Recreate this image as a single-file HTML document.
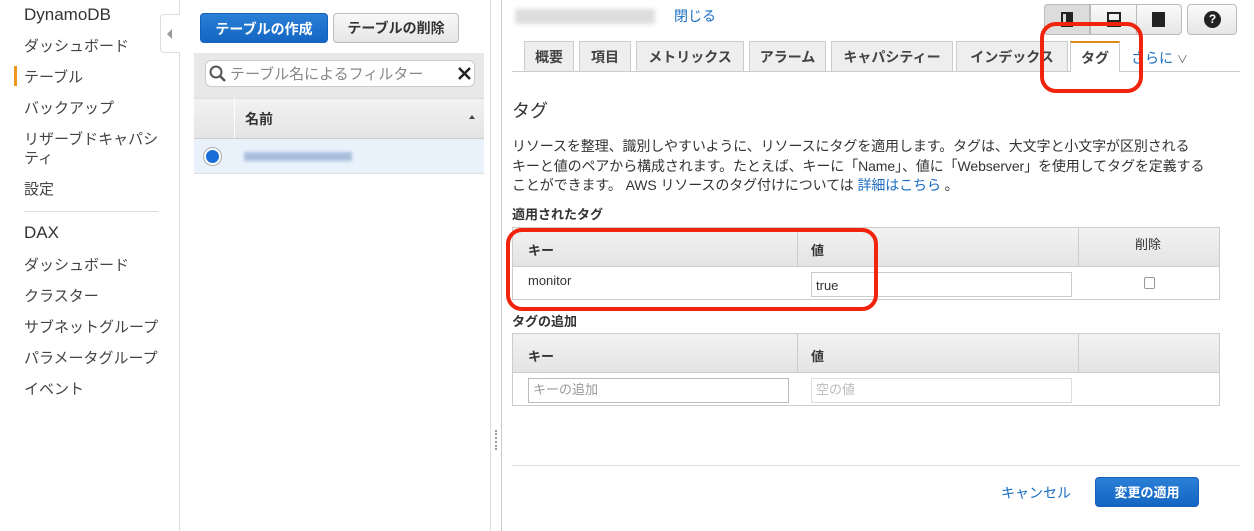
<!DOCTYPE html>
<html><head><meta charset="utf-8"><style>
*{box-sizing:border-box;margin:0;padding:0}
body{width:1254px;height:531px;position:relative;overflow:hidden;background:#fff;font-family:"Liberation Sans","Noto Sans CJK JP",sans-serif;color:#333}
.a{position:absolute;white-space:nowrap}
.nav{font-size:15px;color:#444}
.btn{position:absolute;border-radius:4px;font-size:14px;font-weight:bold;text-align:center}
.tab{position:absolute;top:41px;height:30px;background:#eee;border:1px solid #ccc;border-bottom:none;font-size:14px;font-weight:bold;text-align:center;line-height:30px;color:#444}
.th{background:linear-gradient(#f2f2f2,#e4e4e4);}
.red{position:absolute;border:4px solid #f0230c;border-radius:16px}
.inp{position:absolute;border:1px solid #ccc;background:#fff;font-size:13px;padding-left:4px;line-height:22px}
</style></head><body>
<div class="a" style="left:24px;top:5px;font-size:17px;color:#333">DynamoDB</div>
<div class="a nav" style="left:24px;top:35px">ダッシュボード</div>
<div class="a" style="left:14px;top:66px;width:3px;height:20px;background:#f0961e"></div>
<div class="a nav" style="left:24px;top:66px">テーブル</div>
<div class="a nav" style="left:24px;top:97px">バックアップ</div>
<div class="a nav" style="left:24px;top:128px">リザーブドキャパシ</div>
<div class="a nav" style="left:24px;top:147px">ティ</div>
<div class="a nav" style="left:24px;top:178px">設定</div>
<div class="a" style="left:24px;top:211px;width:134px;height:1px;background:#ddd"></div>
<div class="a" style="left:24px;top:223px;font-size:17px">DAX</div>
<div class="a nav" style="left:24px;top:254px">ダッシュボード</div>
<div class="a nav" style="left:24px;top:285px">クラスター</div>
<div class="a nav" style="left:24px;top:316px">サブネットグループ</div>
<div class="a nav" style="left:24px;top:347px">パラメータグループ</div>
<div class="a nav" style="left:24px;top:378px">イベント</div>
<div class="a" style="left:179px;top:0;width:1px;height:531px;background:#ddd"></div>
<div class="a" style="left:160px;top:14px;width:20px;height:39px;background:#fff;border:1px solid #ddd;border-right:none;border-radius:4px 0 0 4px"></div>
<div class="a" style="left:167px;top:29px;width:0;height:0;border-top:5px solid transparent;border-bottom:5px solid transparent;border-right:5px solid #999"></div>
<div class="btn" style="left:200px;top:13px;width:128px;height:30px;background:linear-gradient(#2a7fd6,#1466c2);color:#fff;line-height:30px;border:1px solid #1560b8">テーブルの作成</div>
<div class="btn" style="left:333px;top:13px;width:126px;height:30px;background:linear-gradient(#f8f8f8,#e6e6e6);border:1px solid #bbb;color:#333;line-height:28px">テーブルの削除</div>
<div class="a" style="left:194px;top:53px;width:290px;height:45px;background:#e8e8e8"></div>
<div class="a" style="left:205px;top:60px;width:270px;height:27px;background:#fff;border:1px solid #ccc;border-radius:6px"></div>
<svg class="a" style="left:208px;top:64px" width="20" height="20"><circle cx="8" cy="8" r="5.5" stroke="#555" stroke-width="2" fill="none"/><line x1="12" y1="12" x2="17" y2="17" stroke="#555" stroke-width="2.5"/></svg>
<div class="a" style="left:230px;top:63px;font-size:15px;color:#888">テーブル名によるフィルター</div>
<svg class="a" style="left:457px;top:66px" width="15" height="15"><path d="M2 2L13 13M13 2L2 13" stroke="#222" stroke-width="2.5"/></svg>
<div class="a th" style="left:194px;top:98px;width:290px;height:40px;border-top:1px solid #ddd"></div>
<div class="a" style="left:234px;top:98px;width:1px;height:40px;background:#fff"></div>
<div class="a" style="left:245px;top:109px;font-size:14px;font-weight:bold">名前</div>
<div class="a" style="left:469px;top:115px;border-left:3px solid transparent;border-right:3px solid transparent;border-bottom:4px solid #444"></div>
<div class="a" style="left:194px;top:138px;width:290px;height:36px;background:#e9f2fb;border-top:1px solid #ccc;border-bottom:1px solid #ddd"></div>
<div class="a" style="left:204px;top:148px;width:17px;height:17px;border-radius:50%;background:#1a6ed8;border:2px solid #fff;box-shadow:0 0 0 1px #aaa"></div>
<div class="a" style="left:244px;top:152px;width:108px;height:9px;background:#a9bedb;filter:blur(1.5px)"></div>
<div class="a" style="left:490px;top:0;width:1px;height:531px;background:#ddd"></div>
<div class="a" style="left:495px;top:430px;width:2px;height:20px;border-left:2px dotted #999"></div>
<div class="a" style="left:501px;top:0;width:1px;height:531px;background:#ccc"></div>
<div class="a" style="left:515px;top:9px;width:140px;height:15px;background:#ddd;filter:blur(2px)"></div>
<div class="a" style="left:674px;top:6px;font-size:14px;color:#1a6dc2">閉じる</div>
<div class="a" style="left:1044px;top:4px;width:138px;height:31px;border:1px solid #bbb;border-radius:4px;background:linear-gradient(#fafafa,#e6e6e6)"></div>
<div class="a" style="left:1044px;top:4px;width:46px;height:31px;background:#dcdcdc;border:1px solid #bbb;border-radius:4px 0 0 4px"></div>
<div class="a" style="left:1090px;top:4px;width:1px;height:31px;background:#bbb"></div>
<div class="a" style="left:1136px;top:4px;width:1px;height:31px;background:#bbb"></div>
<div class="a" style="left:1061px;top:12px;width:12px;height:15px;border:2px solid #222;border-right-width:7px"></div>
<div class="a" style="left:1107px;top:12px;width:14px;height:15px;border:2px solid #222;border-bottom-width:7px"></div>
<div class="a" style="left:1152px;top:12px;width:13px;height:15px;background:#222"></div>
<div class="a" style="left:1187px;top:4px;width:50px;height:31px;border:1px solid #bbb;border-radius:4px;background:linear-gradient(#fafafa,#e6e6e6)"></div>
<div class="a" style="left:1204px;top:11px;width:17px;height:17px;border-radius:50%;background:#222;color:#fff;font-size:12px;font-weight:bold;text-align:center;line-height:17px">?</div>
<div class="tab" style="left:524px;width:50px">概要</div>
<div class="tab" style="left:579px;width:52px">項目</div>
<div class="tab" style="left:636px;width:108px">メトリックス</div>
<div class="tab" style="left:749px;width:77px">アラーム</div>
<div class="tab" style="left:831px;width:122px">キャパシティー</div>
<div class="tab" style="left:956px;width:112px">インデックス</div>
<div class="a" style="left:512px;top:71px;width:728px;height:1px;background:#ccc"></div>
<div class="tab" style="left:1070px;width:50px;background:#fff;border-top:2px solid #e08a1e;height:31px">タグ</div>
<div class="a" style="left:1131px;top:48px;font-size:14px;color:#1a6dc2">さらに <span style="color:#666;font-size:11px">∨</span></div>
<div class="red" style="left:1040px;top:22px;width:103px;height:71px"></div>
<div class="a" style="left:512px;top:97px;font-size:18px">タグ</div>
<div class="a" style="left:512px;top:137px;font-size:14px;line-height:19.5px;letter-spacing:-0.1px">リソースを整理、識別しやすいように、リソースにタグを適用します。タグは、大文字と小文字が区別される<br>キーと値のペアから構成されます。たとえば、キーに「Name」、値に「Webserver」を使用してタグを定義する<br>ことができます。 AWS リソースのタグ付けについては <span style="color:#1a6dc2">詳細はこちら</span> 。</div>
<div class="a" style="left:512px;top:204px;font-size:13px;font-weight:bold">適用されたタグ</div>
<div class="a th" style="left:512px;top:227px;width:708px;height:40px;border:1px solid #ccc"></div>
<div class="a" style="left:512px;top:267px;width:708px;height:33px;border:1px solid #ccc;border-top:none"></div>
<div class="a" style="left:797px;top:228px;width:1px;height:39px;background:#ccc"></div>
<div class="a" style="left:1078px;top:228px;width:1px;height:39px;background:#ccc"></div>
<div class="a" style="left:528px;top:240px;font-size:13px;font-weight:bold">キー</div>
<div class="a" style="left:811px;top:240px;font-size:13px;font-weight:bold">値</div>
<div class="a" style="left:1135px;top:234px;font-size:13px">削除</div>
<div class="a" style="left:528px;top:273px;font-size:13px">monitor</div>
<div class="inp" style="left:811px;top:272px;width:261px;height:25px;font-size:13px;padding-top:2px">true</div>
<div class="a" style="left:1144px;top:277px;width:11px;height:12px;border:1px solid #999;border-radius:2px"></div>
<div class="red" style="left:506px;top:228px;width:372px;height:83px"></div>
<div class="a" style="left:512px;top:311px;font-size:13px;font-weight:bold">タグの追加</div>
<div class="a th" style="left:512px;top:333px;width:708px;height:40px;border:1px solid #ccc"></div>
<div class="a" style="left:512px;top:373px;width:708px;height:33px;border:1px solid #ccc;border-top:none"></div>
<div class="a" style="left:797px;top:334px;width:1px;height:39px;background:#ccc"></div>
<div class="a" style="left:1078px;top:334px;width:1px;height:39px;background:#ccc"></div>
<div class="a" style="left:528px;top:346px;font-size:13px;font-weight:bold">キー</div>
<div class="a" style="left:811px;top:346px;font-size:13px;font-weight:bold">値</div>
<div class="inp" style="left:528px;top:378px;width:261px;height:25px;color:#999;border-color:#bbb">キーの追加</div>
<div class="inp" style="left:811px;top:378px;width:261px;height:25px;color:#bbb;border-color:#ddd">空の値</div>
<div class="a" style="left:512px;top:465px;width:728px;height:1px;background:#ddd"></div>
<div class="a" style="left:1001px;top:483px;font-size:14px;color:#1a6dc2">キャンセル</div>
<div class="btn" style="left:1095px;top:477px;width:104px;height:30px;background:linear-gradient(#2a7fd6,#1466c2);color:#fff;line-height:30px;font-size:13px;border:1px solid #1560b8">変更の適用</div>
</body></html>
